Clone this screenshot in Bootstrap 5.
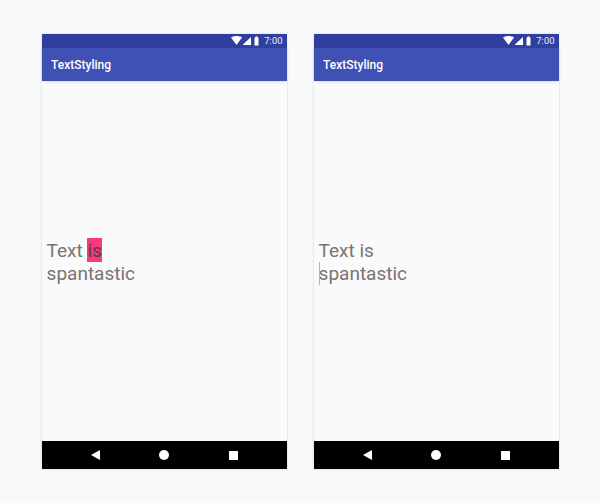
<!DOCTYPE html>
<html lang="en"><head><meta charset="utf-8"><title>TextStyling</title>
<link href="https://cdn.jsdelivr.net/npm/bootstrap@5.3.0/dist/css/bootstrap.min.css" rel="stylesheet">
<style>
html,body{height:100%}
body{background:#f8f9fb;font-family:Roboto,sans-serif;overflow:hidden}
.stage{padding:34px 0 0 41.6px;gap:27px}
.phone{width:245px;height:435px;background:#fafafa;box-shadow:0 0 2px rgba(90,110,130,.3);opacity:.999}
.statusbar{height:14px;background:#303f9f;color:#eceef8;font-size:9.500px;padding-right:4px;gap:4px}
.appbar{height:33px;background:#3f51b5;color:#fff;font-size:12px;font-weight:500;padding-left:9.500px;padding-top:1px;box-shadow:0 1px 2px rgba(0,0,0,.12)}
.screen{padding-left:5px;padding-top:158px;color:#757575;font-size:19px;line-height:23px}
.hilite{background:#f7397e;color:#4e3f49;display:inline-block;height:24px;line-height:23px;vertical-align:top;margin-top:-1px;padding-top:1px}
.caretline{position:relative}
.caretmark{position:absolute;left:0;top:0;width:1px;height:23px;background:#f48fb1}
.navbottom{height:28px;background:#000}
.navtrio{width:147px}
</style></head><body>
<div class="stage d-flex">
<div class="phone d-flex flex-column">
<div class="statusbar d-flex align-items-center justify-content-end">
<svg width="29" height="10" viewBox="0 0 29 10"><path d="M0 1.500C3-.5 8-.5 11 1.500L5.500 9Z" fill="#fff"/><path d="M11.500 9 20 1V9Z" fill="#fff"/><path d="M23.500 1.500h1V.5h2v1h1V9.500h-4Z" fill="#fff"/></svg>
<span>7:00</span></div>
<div class="appbar d-flex align-items-center">TextStyling</div>
<div class="screen flex-grow-1">Text <span class="hilite">is</span><br>spantastic</div>
<div class="navbottom d-flex align-items-center justify-content-center"><div class="navtrio d-flex align-items-center justify-content-between">
<svg width="9" height="10" viewBox="0 0 9 10"><path d="M9 0V10L0 5Z" fill="#fff"/></svg>
<svg width="10" height="10" viewBox="0 0 10 10"><circle cx="5" cy="5" r="5" fill="#fff"/></svg>
<svg width="9" height="9" viewBox="0 0 9 9"><path d="M0 0H9V9H0Z" fill="#fff"/></svg>
</div></div>
</div>
<div class="phone d-flex flex-column">
<div class="statusbar d-flex align-items-center justify-content-end">
<svg width="29" height="10" viewBox="0 0 29 10"><path d="M0 1.500C3-.5 8-.5 11 1.500L5.500 9Z" fill="#fff"/><path d="M11.500 9 20 1V9Z" fill="#fff"/><path d="M23.500 1.500h1V.5h2v1h1V9.500h-4Z" fill="#fff"/></svg>
<span>7:00</span></div>
<div class="appbar d-flex align-items-center">TextStyling</div>
<div class="screen flex-grow-1">Text is<br><span class="caretline d-inline-block"><span class="caretmark"></span>spantastic</span></div>
<div class="navbottom d-flex align-items-center justify-content-center"><div class="navtrio d-flex align-items-center justify-content-between">
<svg width="9" height="10" viewBox="0 0 9 10"><path d="M9 0V10L0 5Z" fill="#fff"/></svg>
<svg width="10" height="10" viewBox="0 0 10 10"><circle cx="5" cy="5" r="5" fill="#fff"/></svg>
<svg width="9" height="9" viewBox="0 0 9 9"><path d="M0 0H9V9H0Z" fill="#fff"/></svg>
</div></div>
</div>
</div>
<script src="https://cdn.jsdelivr.net/npm/bootstrap@5.3.0/dist/js/bootstrap.bundle.min.js"></script>
</body></html>
